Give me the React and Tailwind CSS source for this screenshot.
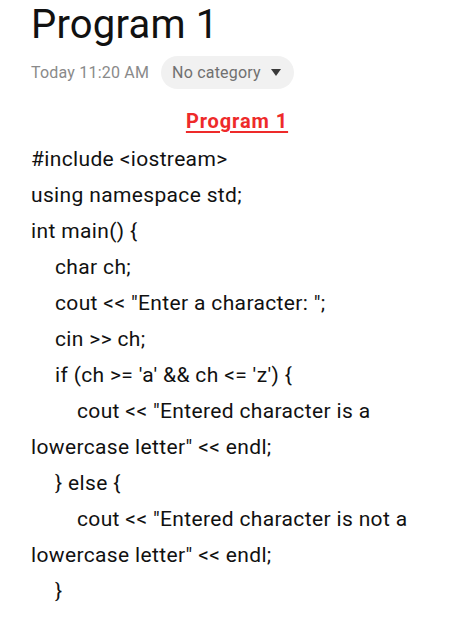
import React from "react";

const lines = [
  { text: "#include <iostream>", indent: "" },
  { text: "using namespace std;", indent: "" },
  { text: "int main() {", indent: "" },
  { text: "char ch;", indent: "indent-[24px]" },
  { text: 'cout << "Enter a character: ";', indent: "indent-[24px]" },
  { text: "cin >> ch;", indent: "indent-[24px]" },
  { text: "if (ch >= 'a' && ch <= 'z') {", indent: "indent-[24px]" },
  { text: 'cout << "Entered character is a', indent: "indent-[46px]" },
  { text: 'lowercase letter" << endl;', indent: "" },
  { text: "} else {", indent: "indent-[24px]" },
  { text: 'cout << "Entered character is not a', indent: "indent-[46px]" },
  { text: 'lowercase letter" << endl;', indent: "" },
  { text: "}", indent: "indent-[24px]" },
];

export default function App() {
  return (
    <div className="min-h-[632px] w-[474px] bg-white px-[31px] font-['Roboto',sans-serif] text-[#111]">
      <h1 className="pt-[1px] text-[40px] leading-[48px] tracking-[0.2px]">Program 1</h1>

      <div className="mt-[7px] flex items-center gap-[12px]">
        <span className="text-[16px] tracking-[0.2px] text-[#8a8a8a]">Today 11:20 AM</span>
        <div className="flex h-[33px] items-center gap-[10px] rounded-full bg-[#f1f1f1] pl-[11px] pr-[13px]">
          <span className="text-[16px] tracking-[0.2px] text-[#707070]">No category</span>
          <svg width="10" height="8" viewBox="0 0 10 8">
            <path d="M0 0 L10 0 L5 7 Z" fill="#3a3a3a" />
          </svg>
        </div>
      </div>

      <div className="mt-[17px] text-center">
        <span className="text-[20px] font-bold tracking-[0.9px] text-[#ee2a2a] underline decoration-[2px] underline-offset-[3px]">
          Program 1
        </span>
      </div>

      <div className="mt-[5px] text-[21px] leading-[36px] tracking-[0.35px]">
        {lines.map((l, i) => (
          <p key={i} className={l.indent}>
            {l.text}
          </p>
        ))}
      </div>
    </div>
  );
}
